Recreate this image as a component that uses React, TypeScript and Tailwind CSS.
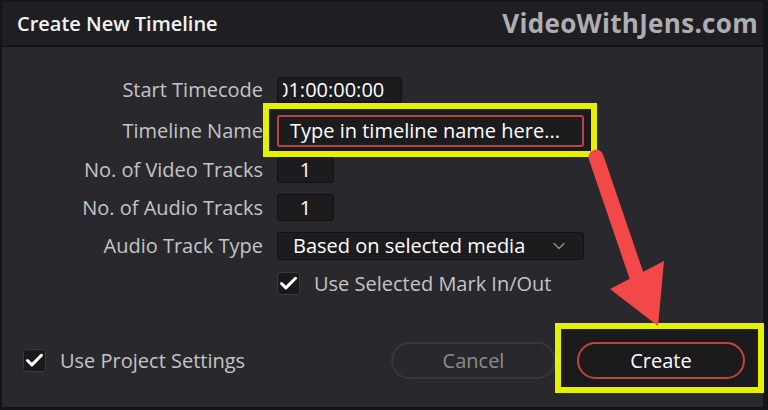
import { Check, ChevronDown } from "lucide-react";

const font = { fontFamily: '"Open Sans", "Noto Sans", sans-serif' };

const Label = ({ text }: { text: string }) => (
  <div className="w-[261px] text-right text-[20px] text-[#c4c4c6] leading-none">{text}</div>
);

const Box = ({ className, children }: { className: string; children?: React.ReactNode }) => (
  <div
    className={`relative z-10 flex items-center rounded-[3px] border border-[#121214] bg-[#1c1c1f] text-[20px] text-white leading-none ${className}`}
  >
    {children}
  </div>
);

const CheckBox = () => (
  <div className="flex h-[23px] w-[23px] items-center justify-center rounded-[3px] border border-[#3a3a3e] bg-[#1a1a1c]">
    <Check size={21} strokeWidth={3.5} className="text-white" />
  </div>
);

export default function App() {
  return (
    <div className="relative h-[410px] w-[768px] overflow-hidden bg-[#151517] pl-[2px] pt-[2px]" style={font}>
      <div className="flex h-[405px] w-[761px] flex-col">
        {/* title bar */}
        <div className="flex h-[45px] shrink-0 items-center justify-between border-b-2 border-[#151517] bg-[#1f1f23] pl-[15px] pr-[5px]">
          <span className="text-[20px] font-semibold text-[#f2f2f2]">Create New Timeline</span>
          <span className="text-[26px] font-bold tracking-[0.3px] text-[#aeaeb2]">VideoWithJens.com</span>
        </div>

        {/* body */}
        <div className="relative flex flex-1 flex-col bg-[#28282d]">
          <div className="mt-[30px] flex h-[26px] items-center">
            <Label text="Start Timecode" />
            <Box className="ml-[14px] h-[26px] w-[125px] pl-[5px]">
              <div className="overflow-hidden">
                <span className="-ml-[6px] block whitespace-nowrap">01:00:00:00</span>
              </div>
            </Box>
          </div>

          <div className="relative mt-[12px] flex h-[32px] items-center">
            <Label text="Timeline Name" />
            <div className="absolute left-[261px] top-[-12px] h-[54px] w-[334px] border-[6px] border-[#e4f200] bg-[#1c1c1f]" />
            <Box className="ml-[14px] h-[32px] w-[307px] border-2 border-[#b8453f] pl-[11px]">
              Type in timeline name here...
            </Box>
          </div>

          <div className="mt-[10px] flex h-[26px] items-center">
            <Label text="No. of Video Tracks" />
            <Box className="ml-[14px] h-[26px] w-[57px] justify-center">1</Box>
          </div>

          <div className="mt-[11px] flex h-[27px] items-center">
            <Label text="No. of Audio Tracks" />
            <Box className="ml-[14px] h-[27px] w-[57px] justify-center">1</Box>
          </div>

          <div className="mt-[11px] flex h-[28px] items-center">
            <Label text="Audio Track Type" />
            <Box className="ml-[14px] h-[28px] w-[307px] justify-between pl-[15px] pr-[14px] text-[#e8e8ea]">
              <span>Based on selected media</span>
              <ChevronDown size={20} strokeWidth={1.6} className="text-[#8e8e92]" />
            </Box>
          </div>

          <div className="mt-[12px] flex h-[23px] items-center pl-[275px]">
            <CheckBox />
            <span className="ml-[14px] text-[20px] leading-none text-[#c4c4c6]">Use Selected Mark In/Out</span>
          </div>

          {/* footer */}
          <div className="relative mb-[28px] mt-auto flex h-[37px] items-center pl-[21px] pr-[18px]">
            <CheckBox />
            <span className="ml-[14px] text-[20px] leading-none text-[#c4c4c6]">Use Project Settings</span>
            <button className="ml-auto flex h-[37px] w-[165px] items-center justify-center rounded-full border-2 border-[#38383c] text-[20px] text-[#8c8c90]">
              Cancel
            </button>
            <div className="absolute right-[-1px] top-[-19px] h-[70px] w-[209px] border-[6px] border-[#e4f200] bg-[#1b1b1e]" />
            <button className="relative z-10 ml-[21px] flex h-[37px] w-[168px] items-center justify-center rounded-full border-2 border-[#c0433d] text-[20px] text-white">
              Create
            </button>
          </div>
        </div>
      </div>

      {/* annotation arrow */}
      <svg className="pointer-events-none absolute left-0 top-0 z-20" width="768" height="410" viewBox="0 0 768 410">
        <line x1="596" y1="157" x2="638" y2="280" stroke="#f24848" strokeWidth="15" strokeLinecap="round" />
        <polygon points="610,289 664,261 658,326" fill="#f24848" />
      </svg>
    </div>
  );
}
